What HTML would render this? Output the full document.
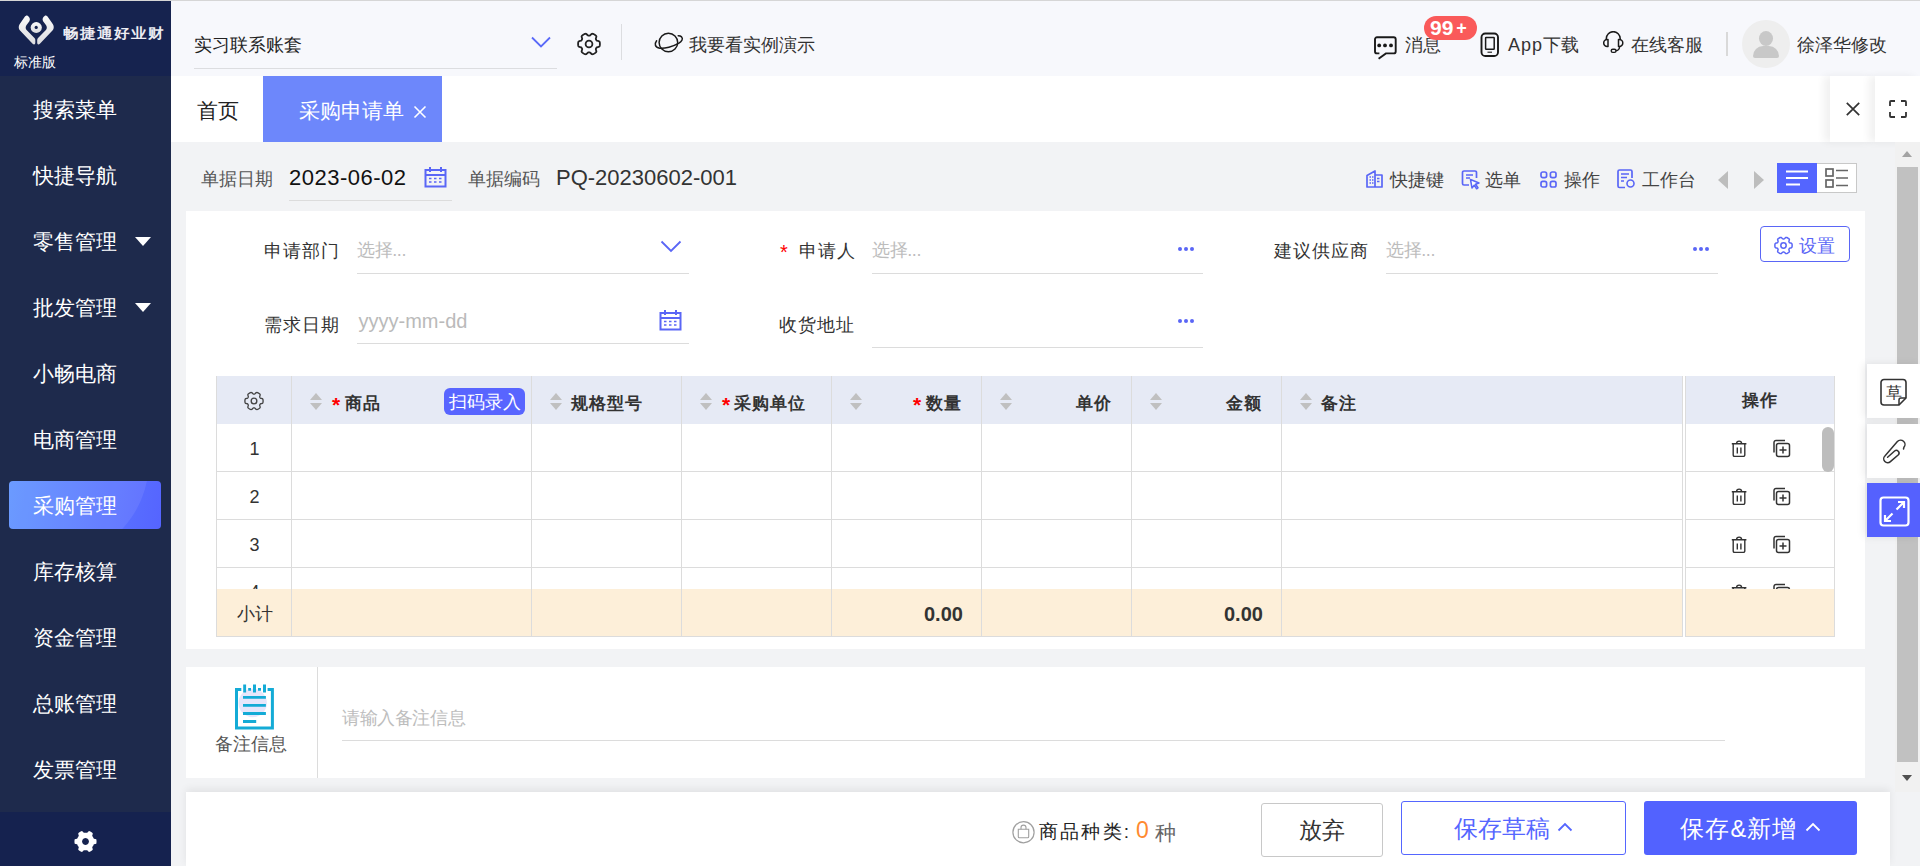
<!DOCTYPE html>
<html><head><meta charset="utf-8">
<style>
*{box-sizing:border-box;margin:0;padding:0}
html,body{width:1920px;height:866px;overflow:hidden}
body{position:relative;background:#f2f3f5;font-family:"Liberation Sans",sans-serif;color:#333}
.a{position:absolute;white-space:nowrap}
svg{display:block}
/* sidebar */
#sb{position:absolute;left:0;top:0;width:171px;height:866px;background:#1e2a4c}
#logo{position:absolute;left:0;top:0;width:171px;height:76px;background:#16234f}
#sbft{position:absolute;left:0;top:812px;width:171px;height:54px;background:#15224f}
.mi{position:absolute;left:33px;font-size:21px;line-height:24px;color:#fff}
.tri{position:absolute;left:135px;width:0;height:0;border-left:8px solid transparent;border-right:8px solid transparent;border-top:9px solid #fff}
#act{position:absolute;left:9px;top:481px;width:152px;height:48px;border-radius:4px;overflow:hidden;
 background:linear-gradient(100deg,#5f93ff 0%,#5b78ff 55%,#5564ff 100%)}
#hdr{position:absolute;left:171px;top:0;width:1749px;height:76px;background:#f7f8fc}
#topline{position:absolute;left:0;top:0;width:1920px;height:1px;background:#d6d6d6;z-index:50}
#tabs{position:absolute;left:171px;top:76px;width:1749px;height:66px;background:#fff}
.t18{font-size:18px;line-height:22px;color:#333}

.lbl{position:absolute;font-size:18px;line-height:22px;color:#333;letter-spacing:1px}
.ph{position:absolute;font-size:18px;line-height:22px;color:#bdbdbd;letter-spacing:-0.4px}
.ul{position:absolute;height:1px;background:#dcdcdc}
.dots{position:absolute;width:17px;height:6px}
.dots i{position:absolute;top:0.3px;width:4.2px;height:4.2px;border-radius:50%;background:#5a66f6}
.th{position:absolute;font-size:17px;line-height:20px;font-weight:bold;color:#333;letter-spacing:1px}
.ast{position:absolute;font-size:21px;line-height:20px;color:#f00;font-weight:bold}
.srt{position:absolute;width:12px;height:18px}
.srt:before{content:"";position:absolute;left:0;top:0;border-left:6px solid transparent;border-right:6px solid transparent;border-bottom:7.5px solid #c0c0c0}
.srt:after{content:"";position:absolute;left:0;top:10px;border-left:6px solid transparent;border-right:6px solid transparent;border-top:7.5px solid #c0c0c0}
.vl{position:absolute;width:1px;background:#dcdcdc}
.hl{position:absolute;height:1px;background:#dcdcdc}
.rn{position:absolute;font-size:18px;line-height:22px;color:#333;width:75px;text-align:center;padding-left:2px}
</style></head><body>
<div id="topline"></div>
<div id="sb">
 <div id="logo">
  <svg class="a" style="left:18px;top:15px" width="37" height="31" viewBox="0 0 37 31">
   <defs><linearGradient id="lg" x1="0" y1="0" x2="0" y2="1"><stop offset="0" stop-color="#fafafa"/><stop offset="1" stop-color="#dcdcdf"/></linearGradient></defs>
   <path id="lf" d="M9.6 0.8 C8.6 0.2 7.6 1 6.6 2 L1.6 9.2 C0.4 11 0.4 13.6 1.8 15.3 L14.6 28.8 C16 30 17.3 29.6 17.3 27.6 L17.3 25 C17.3 24 16.9 23.4 16.2 22.7 L8.6 15 C7.4 13.6 7.4 11.6 8.4 10.2 L11.4 6.2 C12.4 4.6 12 2.4 9.6 0.8 Z" fill="url(#lg)"/>
   <use href="#lf" transform="translate(36.5 0) scale(-1 1)"/>
   <ellipse cx="18.25" cy="12.5" rx="5.6" ry="5.4" fill="url(#lg)"/>
   <circle cx="18.2" cy="12.4" r="1.6" fill="#16234f"/>
  </svg>
  <div class="a" style="left:63px;top:24px;font-size:16px;line-height:18px;color:#ececf2;font-weight:bold;letter-spacing:1px;transform:scaleY(0.9);transform-origin:0 50%">畅捷通好业财</div>
  <div class="a" style="left:14px;top:54px;font-size:14px;line-height:16px;color:#fff">标准版</div>
 </div>
 <div class="mi" style="top:98px">搜索菜单</div>
 <div class="mi" style="top:164px">快捷导航</div>
 <div class="mi" style="top:230px">零售管理</div><div class="tri" style="top:237px"></div>
 <div class="mi" style="top:296px">批发管理</div><div class="tri" style="top:303px"></div>
 <div class="mi" style="top:362px">小畅电商</div>
 <div class="mi" style="top:428px">电商管理</div>
 <div id="act"><div style="position:absolute;left:-60px;top:-120px;width:200px;height:200px;border-radius:50%;background:rgba(255,255,255,0.08)"></div></div>
 <div class="mi" style="top:494px">采购管理</div>
 <div class="mi" style="top:560px">库存核算</div>
 <div class="mi" style="top:626px">资金管理</div>
 <div class="mi" style="top:692px">总账管理</div>
 <div class="mi" style="top:758px">发票管理</div>
 <div id="sbft">
  <svg class="a" style="left:73px;top:16.8px" width="25" height="25" viewBox="0 0 24 24"><path fill="#fff" fill-rule="evenodd" d="M22.60 12.00 L22.58 12.69 L22.50 13.38 L22.33 14.05 L21.39 14.51 L20.09 14.75 L19.77 15.22 L19.53 15.72 L19.27 16.20 L18.99 16.67 L18.67 17.12 L18.42 17.63 L18.87 18.87 L18.95 19.92 L18.45 20.41 L17.89 20.81 L17.30 21.18 L16.69 21.51 L16.05 21.79 L15.39 21.97 L14.51 21.39 L13.67 20.38 L13.10 20.34 L12.55 20.38 L12.00 20.40 L11.45 20.38 L10.90 20.34 L10.33 20.38 L9.49 21.39 L8.61 21.97 L7.95 21.79 L7.31 21.51 L6.70 21.18 L6.11 20.81 L5.55 20.41 L5.05 19.92 L5.13 18.87 L5.58 17.63 L5.33 17.12 L5.01 16.67 L4.73 16.20 L4.47 15.72 L4.23 15.22 L3.91 14.75 L2.61 14.51 L1.67 14.05 L1.50 13.38 L1.42 12.69 L1.40 12.00 L1.42 11.31 L1.50 10.62 L1.67 9.95 L2.61 9.49 L3.91 9.25 L4.23 8.78 L4.47 8.28 L4.73 7.80 L5.01 7.33 L5.33 6.88 L5.58 6.37 L5.13 5.13 L5.05 4.08 L5.55 3.59 L6.11 3.19 L6.70 2.82 L7.31 2.49 L7.95 2.21 L8.61 2.03 L9.49 2.61 L10.33 3.62 L10.90 3.66 L11.45 3.62 L12.00 3.60 L12.55 3.62 L13.10 3.66 L13.67 3.62 L14.51 2.61 L15.39 2.03 L16.05 2.21 L16.69 2.49 L17.30 2.82 L17.89 3.19 L18.45 3.59 L18.95 4.08 L18.87 5.13 L18.42 6.37 L18.67 6.88 L18.99 7.33 L19.27 7.80 L19.53 8.28 L19.77 8.78 L20.09 9.25 L21.39 9.49 L22.33 9.95 L22.50 10.62 L22.58 11.31Z M12 8.7a3.3 3.3 0 1 0 0.001 0Z"/></svg>
 </div>
</div>

<div id="hdr">
 <div class="a t18" style="left:23px;top:34px;color:#222">实习联系账套</div>
 <div class="a" style="left:23px;top:68px;width:363px;height:1px;background:#dcdde0"></div>
 <svg class="a" style="left:359px;top:36px" width="22" height="12" viewBox="0 0 22 12"><path d="M2 1.5 L11 10.5 L20 1.5" fill="none" stroke="#5a6af8" stroke-width="1.8"/></svg>
 <svg class="a" style="left:406px;top:32px" width="24" height="24" viewBox="0 0 24 24"><path fill="none" stroke="#222" stroke-width="1.8" stroke-linejoin="round" d="M22.90 12.00 L22.88 12.71 L22.80 13.42 L22.63 14.11 L22.14 14.72 L20.94 15.03 L19.93 15.29 L19.48 15.69 L19.19 16.15 L18.94 16.64 L18.81 17.23 L19.10 18.22 L19.43 19.43 L19.14 20.15 L18.63 20.64 L18.05 21.06 L17.45 21.44 L16.82 21.77 L16.17 22.06 L15.48 22.26 L14.72 22.14 L13.84 21.26 L13.12 20.51 L12.55 20.33 L12.00 20.30 L11.45 20.33 L10.88 20.51 L10.16 21.26 L9.28 22.14 L8.52 22.26 L7.83 22.06 L7.18 21.77 L6.55 21.44 L5.95 21.06 L5.37 20.64 L4.86 20.15 L4.57 19.43 L4.90 18.22 L5.19 17.23 L5.06 16.64 L4.81 16.15 L4.52 15.69 L4.07 15.29 L3.06 15.03 L1.86 14.72 L1.37 14.11 L1.20 13.42 L1.12 12.71 L1.10 12.00 L1.12 11.29 L1.20 10.58 L1.37 9.89 L1.86 9.28 L3.06 8.97 L4.07 8.71 L4.52 8.31 L4.81 7.85 L5.06 7.36 L5.19 6.77 L4.90 5.78 L4.57 4.57 L4.86 3.85 L5.37 3.36 L5.95 2.94 L6.55 2.56 L7.18 2.23 L7.83 1.94 L8.52 1.74 L9.28 1.86 L10.16 2.74 L10.88 3.49 L11.45 3.67 L12.00 3.70 L12.55 3.67 L13.12 3.49 L13.84 2.74 L14.72 1.86 L15.48 1.74 L16.17 1.94 L16.82 2.23 L17.45 2.56 L18.05 2.94 L18.63 3.36 L19.14 3.85 L19.43 4.57 L19.10 5.78 L18.81 6.77 L18.94 7.36 L19.19 7.85 L19.48 8.31 L19.93 8.71 L20.94 8.97 L22.14 9.28 L22.63 9.89 L22.80 10.58 L22.88 11.29Z"/><circle cx="12" cy="12" r="3.4" fill="none" stroke="#222" stroke-width="1.8"/></svg>
 <div class="a" style="left:450px;top:24px;width:1px;height:36px;background:#dcdde0"></div>
 <svg class="a" style="left:483px;top:31px" width="30" height="24" viewBox="0 0 30 24"><circle cx="14.4" cy="11.5" r="9.3" fill="none" stroke="#1a1a1a" stroke-width="1.5"/><path d="M2.6 9.8C0.6 12.5 0.4 16.4 5.8 17.2C10.5 17.8 19 15.5 24.6 12.4C28.2 10.2 29.2 7.6 27.6 5.9C26.9 5.2 25.6 4.8 24.2 4.8" fill="none" stroke="#1a1a1a" stroke-width="1.5" stroke-linecap="round"/></svg>
 <div class="a t18" style="left:518px;top:34px;color:#333">我要看实例演示</div>

 <svg class="a" style="left:1202px;top:35px" width="26" height="25" viewBox="0 0 26 25"><path d="M6.4 18.4H4a2 2 0 0 1-2-2V4.3a2 2 0 0 1 2-2h16.7a2 2 0 0 1 2 2v12.1a2 2 0 0 1-2 2h-7.8L5.6 23.8" fill="none" stroke="#1a1a1a" stroke-width="1.9"/><circle cx="6.2" cy="10.4" r="1.9" fill="#1a1a1a"/><circle cx="12" cy="10.4" r="1.9" fill="#1a1a1a"/><circle cx="18" cy="10.4" r="1.9" fill="#1a1a1a"/></svg>
 <div class="a t18" style="left:1234px;top:34px;color:#333">消息</div>
 <div class="a" style="left:1253px;top:16px;width:53px;height:24px;border-radius:12px;background:#fa5a5a;color:#fff;font-size:21px;line-height:23px;font-weight:bold;text-align:left;padding-left:6px">99<span style="font-size:18px;margin-left:3px;position:relative;top:-1px">+</span></div>
 <svg class="a" style="left:1309px;top:32px" width="20" height="25" viewBox="0 0 20 25"><rect x="1.5" y="1.5" width="16.5" height="22.5" rx="3.8" fill="none" stroke="#1a1a1a" stroke-width="1.9"/><rect x="5.6" y="5.5" width="8.6" height="11.8" rx="0.6" fill="none" stroke="#1a1a1a" stroke-width="1.5"/><path d="M7.5 20.2h4.5" stroke="#1a1a1a" stroke-width="1.1"/></svg>
 <div class="a t18" style="left:1337px;top:34px;color:#333"><span style="letter-spacing:1px">App</span>下载</div>
 <svg class="a" style="left:1431px;top:31px" width="23" height="23" viewBox="0 0 23 23"><path d="M4.3 8.6V7.6A6.95 6.95 0 0 1 18.2 7.6V8.6" fill="none" stroke="#1a1a1a" stroke-width="1.5"/><path d="M6 8.6V15.6H5.2A3.5 3.5 0 0 1 5.2 8.6Z M16.5 8.6V15.6H17.3A3.5 3.5 0 0 0 17.3 8.6Z" fill="none" stroke="#1a1a1a" stroke-width="1.5" stroke-linejoin="round"/><path d="M17.6 15.8C17.4 18.2 16 19.6 13.9 19.8" fill="none" stroke="#1a1a1a" stroke-width="1.4"/><rect x="9.2" y="18.2" width="4.8" height="3.2" rx="1.6" fill="none" stroke="#1a1a1a" stroke-width="1.4"/></svg>
 <div class="a t18" style="left:1460px;top:34px;color:#333">在线客服</div>
 <div class="a" style="left:1555px;top:32px;width:2px;height:24px;background:#d9d9d9"></div>
 <div class="a" style="left:1571px;top:20px;width:48px;height:48px;border-radius:50%;background:#eeeeee;overflow:hidden">
  <div style="position:absolute;left:17px;top:11px;width:14px;height:15px;border-radius:50%;background:#c8c8c8"></div>
  <div style="position:absolute;left:11px;top:26px;width:26px;height:12px;border-radius:10px 10px 2px 2px;background:#c8c8c8"></div>
 </div>
 <div class="a t18" style="left:1626px;top:34px;color:#333">徐泽华修改</div>
</div>
<div id="tabs">
 <div class="a" style="left:26px;top:23px;font-size:21px;line-height:24px;color:#222">首页</div>
 <div class="a" style="left:92px;top:0;width:179px;height:66px;background:#6d87fb"></div>
 <div class="a" style="left:128px;top:23px;font-size:21px;line-height:24px;color:#fff">采购申请单</div>
 <svg class="a" style="left:242px;top:29px" width="14" height="14" viewBox="0 0 14 14"><path d="M1.5 1.5L12.5 12.5M12.5 1.5L1.5 12.5" stroke="#fff" stroke-width="1.6"/></svg>
 <div class="a" style="left:1659px;top:0;width:45px;height:66px;background:#fff;box-shadow:-6px 0 8px rgba(0,0,0,0.06)"></div>
 <svg class="a" style="left:1675px;top:26px" width="14" height="14" viewBox="0 0 14 14"><path d="M0.8 0.8L13.2 13.2M13.2 0.8L0.8 13.2" stroke="#333" stroke-width="1.7"/></svg>
 <div class="a" style="left:1704px;top:0;width:45px;height:66px;background:#fff;box-shadow:-6px 0 8px rgba(0,0,0,0.06)"></div>
 <svg class="a" style="left:1718px;top:24px" width="18" height="18" viewBox="0 0 18 18"><path d="M1 6V2a1 1 0 0 1 1-1h4M12 1h4a1 1 0 0 1 1 1v4M17 12v4a1 1 0 0 1-1 1h-4M6 17H2a1 1 0 0 1-1-1v-4" fill="none" stroke="#333" stroke-width="1.8"/></svg>
</div>

<!-- toolbar row -->
<div class="lbl" style="left:201px;top:168px;color:#555;letter-spacing:0">单据日期</div>
<div class="a" style="left:289px;top:165px;font-size:22px;line-height:26px;color:#111;letter-spacing:0.5px">2023-06-02</div>
<svg class="a" style="left:424px;top:166px" width="23" height="22" viewBox="0 0 23 22"><rect x="1.5" y="4" width="20" height="16.5" fill="none" stroke="#5a66f6" stroke-width="2"/><path d="M6 1v5M17 1v5M1.5 9h20" stroke="#5a66f6" stroke-width="2"/><path d="M5 12.5h2.5M10 12.5h2.5M15 12.5h2.5M5 16h2.5M10 16h2.5M15 16h2.5" stroke="#5a66f6" stroke-width="1.6"/></svg>
<div class="ul" style="left:289px;top:200px;width:163px"></div>
<div class="lbl" style="left:468px;top:168px;color:#555;letter-spacing:0">单据编码</div>
<div class="a" style="left:556px;top:165px;font-size:22px;line-height:26px;color:#333">PQ-20230602-001</div>

<svg class="a" style="left:1365px;top:169px" width="20" height="20" viewBox="0 0 20 20"><path d="M2 6.5 L10 2 V18 H2 Z M10 6 H17 V18 H10" fill="none" stroke="#5a66f6" stroke-width="1.7" stroke-linejoin="round"/><path d="M4.5 8h1.5M7 8h1.5M4.5 11h1.5M7 11h1.5M4.5 14h1.5M7 14h1.5M12 9.5h2.5M12 12.5h2.5" stroke="#5a66f6" stroke-width="1.4"/></svg>
<div class="lbl" style="left:1390px;top:169px;color:#444;letter-spacing:0">快捷键</div>
<svg class="a" style="left:1461px;top:170px" width="20" height="20" viewBox="0 0 20 20"><path d="M8 15H3a1.5 1.5 0 0 1-1.5-1.5v-11A1.5 1.5 0 0 1 3 1h11a1.5 1.5 0 0 1 1.5 1.5V8" fill="none" stroke="#5a66f6" stroke-width="1.7"/><path d="M5 5h7M5 8h4" stroke="#5a66f6" stroke-width="1.5"/><path d="M9.5 9.5 L18 13 L14.5 14.2 L17 17.8 L15.6 18.8 L13.2 15.2 L11 18 Z" fill="#fff" stroke="#5a66f6" stroke-width="1.5" stroke-linejoin="round"/></svg>
<div class="lbl" style="left:1485px;top:169px;color:#444;letter-spacing:0">选单</div>
<svg class="a" style="left:1540px;top:170.5px" width="17" height="17" viewBox="0 0 17 17"><rect x="1" y="1" width="5.6" height="5.6" rx="1.8" fill="none" stroke="#5a66f6" stroke-width="1.7"/><rect x="10.4" y="1" width="5.6" height="5.6" rx="1.8" fill="none" stroke="#5a66f6" stroke-width="1.7"/><rect x="1" y="10.4" width="5.6" height="5.6" rx="1.8" fill="none" stroke="#5a66f6" stroke-width="1.7"/><rect x="10.4" y="10.4" width="5.6" height="5.6" rx="1.8" fill="none" stroke="#5a66f6" stroke-width="1.7"/></svg>
<div class="lbl" style="left:1564px;top:169px;color:#444;letter-spacing:0">操作</div>
<svg class="a" style="left:1617px;top:169px" width="19" height="20" viewBox="0 0 19 20"><path d="M8 18.5H2.5a1.5 1.5 0 0 1-1.5-1.5V2.5A1.5 1.5 0 0 1 2.5 1h11A1.5 1.5 0 0 1 15 2.5V9" fill="none" stroke="#5a66f6" stroke-width="1.7"/><path d="M4 5h8M4 8.5h6M4 12h3" stroke="#5a66f6" stroke-width="1.5"/><circle cx="13.5" cy="14.5" r="3.5" fill="none" stroke="#5a66f6" stroke-width="1.6"/></svg>
<div class="lbl" style="left:1642px;top:169px;color:#444;letter-spacing:0">工作台</div>
<div class="a" style="left:1718px;top:170.5px;width:0;height:0;border-top:9px solid transparent;border-bottom:9px solid transparent;border-right:10px solid #bdbdbd"></div>
<div class="a" style="left:1754px;top:170.5px;width:0;height:0;border-top:9px solid transparent;border-bottom:9px solid transparent;border-left:10px solid #bdbdbd"></div>
<div class="a" style="left:1777px;top:163px;width:80px;height:30px;border:1px solid #c8c8c8;background:#fff"></div>
<div class="a" style="left:1777px;top:163px;width:40px;height:30px;background:#5465ff"></div>
<svg class="a" style="left:1785px;top:169px" width="25" height="18" viewBox="0 0 25 18"><path d="M1 2.5h22M1 9h22M1 15.5h14" stroke="#fff" stroke-width="1.8"/></svg>
<svg class="a" style="left:1825px;top:168px" width="24" height="20" viewBox="0 0 24 20"><rect x="1" y="1" width="7" height="7" fill="none" stroke="#666" stroke-width="1.7"/><rect x="1" y="12" width="7" height="7" fill="none" stroke="#666" stroke-width="1.7"/><path d="M11 2.5h12M11 10h12M11 17.5h12" stroke="#666" stroke-width="1.7"/></svg>

<!-- scrollbar -->
<div class="a" style="left:1895px;top:142px;width:25px;height:650px;background:#f1f1f1"></div>
<div class="a" style="left:1897px;top:167px;width:21px;height:595px;background:#c1c1c1"></div>
<div class="a" style="left:1902px;top:151px;width:0;height:0;border-left:5px solid transparent;border-right:5px solid transparent;border-bottom:6px solid #a3a3a3"></div>
<div class="a" style="left:1902px;top:775px;width:0;height:0;border-left:5px solid transparent;border-right:5px solid transparent;border-top:6px solid #505050"></div>

<!-- form panel -->
<div class="a" style="left:186px;top:211px;width:1679px;height:438px;background:#fff"></div>
<div class="lbl" style="left:264px;top:240px">申请部门</div>
<div class="ph" style="left:357px;top:239px">选择...</div>
<svg class="a" style="left:660px;top:240px" width="22" height="13" viewBox="0 0 22 13"><path d="M1.5 1.5L11 11L20.5 1.5" fill="none" stroke="#5a66f6" stroke-width="1.8"/></svg>
<div class="ul" style="left:357px;top:273px;width:332px"></div>
<div class="a" style="left:780px;top:241px;font-size:20px;line-height:22px;color:#f00">*</div>
<div class="lbl" style="left:799px;top:240px">申请人</div>
<div class="ph" style="left:872px;top:239px">选择...</div>
<div class="dots" style="left:1177px;top:247px"><i style="left:0.5px"></i><i style="left:6.5px"></i><i style="left:12.5px"></i></div>
<div class="ul" style="left:872px;top:273px;width:331px"></div>
<div class="lbl" style="left:1274px;top:240px">建议供应商</div>
<div class="ph" style="left:1386px;top:239px">选择...</div>
<div class="dots" style="left:1692px;top:247px"><i style="left:0.5px"></i><i style="left:6.5px"></i><i style="left:12.5px"></i></div>
<div class="ul" style="left:1386px;top:273px;width:332px"></div>
<div class="a" style="left:1760px;top:226px;width:90px;height:36px;border:1px solid #5a66f6;border-radius:4px"></div>
<svg class="a" style="left:1774px;top:236px" width="19" height="19" viewBox="0 0 24 24"><path fill="none" stroke="#5a66f6" stroke-width="1.9" stroke-linejoin="round" d="M22.90 12.00 L22.88 12.71 L22.80 13.42 L22.63 14.11 L22.14 14.72 L20.94 15.03 L19.93 15.29 L19.48 15.69 L19.19 16.15 L18.94 16.64 L18.81 17.23 L19.10 18.22 L19.43 19.43 L19.14 20.15 L18.63 20.64 L18.05 21.06 L17.45 21.44 L16.82 21.77 L16.17 22.06 L15.48 22.26 L14.72 22.14 L13.84 21.26 L13.12 20.51 L12.55 20.33 L12.00 20.30 L11.45 20.33 L10.88 20.51 L10.16 21.26 L9.28 22.14 L8.52 22.26 L7.83 22.06 L7.18 21.77 L6.55 21.44 L5.95 21.06 L5.37 20.64 L4.86 20.15 L4.57 19.43 L4.90 18.22 L5.19 17.23 L5.06 16.64 L4.81 16.15 L4.52 15.69 L4.07 15.29 L3.06 15.03 L1.86 14.72 L1.37 14.11 L1.20 13.42 L1.12 12.71 L1.10 12.00 L1.12 11.29 L1.20 10.58 L1.37 9.89 L1.86 9.28 L3.06 8.97 L4.07 8.71 L4.52 8.31 L4.81 7.85 L5.06 7.36 L5.19 6.77 L4.90 5.78 L4.57 4.57 L4.86 3.85 L5.37 3.36 L5.95 2.94 L6.55 2.56 L7.18 2.23 L7.83 1.94 L8.52 1.74 L9.28 1.86 L10.16 2.74 L10.88 3.49 L11.45 3.67 L12.00 3.70 L12.55 3.67 L13.12 3.49 L13.84 2.74 L14.72 1.86 L15.48 1.74 L16.17 1.94 L16.82 2.23 L17.45 2.56 L18.05 2.94 L18.63 3.36 L19.14 3.85 L19.43 4.57 L19.10 5.78 L18.81 6.77 L18.94 7.36 L19.19 7.85 L19.48 8.31 L19.93 8.71 L20.94 8.97 L22.14 9.28 L22.63 9.89 L22.80 10.58 L22.88 11.29Z"/><circle cx="12" cy="12" r="3.4" fill="none" stroke="#5a66f6" stroke-width="1.9"/></svg>
<div class="a" style="left:1799px;top:235px;font-size:18px;line-height:22px;color:#5a66f6">设置</div>

<div class="lbl" style="left:264px;top:314px">需求日期</div>
<div class="a" style="left:358.5px;top:308.5px;font-size:20px;line-height:24px;color:#bababa">yyyy-mm-dd</div>
<svg class="a" style="left:659px;top:309px" width="23" height="22" viewBox="0 0 23 22"><rect x="1.5" y="4" width="20" height="16.5" fill="none" stroke="#5a66f6" stroke-width="2"/><path d="M6 1v5M17 1v5M1.5 9h20" stroke="#5a66f6" stroke-width="2"/><path d="M5 12.5h2.5M10 12.5h2.5M15 12.5h2.5M5 16h2.5M10 16h2.5M15 16h2.5" stroke="#5a66f6" stroke-width="1.6"/></svg>
<div class="ul" style="left:357px;top:343px;width:332px"></div>
<div class="lbl" style="left:779px;top:314px">收货地址</div>
<div class="dots" style="left:1177px;top:319px"><i style="left:0.5px"></i><i style="left:6.5px"></i><i style="left:12.5px"></i></div>
<div class="ul" style="left:872px;top:347px;width:331px"></div>

<!-- table -->
<div class="a" style="left:216px;top:376px;width:1467px;height:48px;background:#e6eaf5"></div>
<div class="a" style="left:1685px;top:376px;width:150px;height:48px;background:#e6eaf5"></div>
<div class="a" style="left:216px;top:589px;width:1467px;height:47px;background:#fdefd9"></div>
<div class="a" style="left:1685px;top:589px;width:150px;height:47px;background:#fdefd9"></div>
<!-- row lines -->
<div class="hl" style="left:216px;top:471px;width:1467px"></div>
<div class="hl" style="left:216px;top:519px;width:1467px"></div>
<div class="hl" style="left:216px;top:567px;width:1467px"></div>
<div class="hl" style="left:216px;top:636px;width:1467px"></div>
<div class="hl" style="left:1685px;top:471px;width:150px"></div>
<div class="hl" style="left:1685px;top:519px;width:150px"></div>
<div class="hl" style="left:1685px;top:567px;width:150px"></div>
<div class="hl" style="left:1685px;top:636px;width:150px"></div>
<!-- col lines -->
<div class="vl" style="left:216px;top:376px;height:261px"></div>
<div class="vl" style="left:291px;top:376px;height:261px"></div>
<div class="vl" style="left:531px;top:376px;height:261px"></div>
<div class="vl" style="left:681px;top:376px;height:261px"></div>
<div class="vl" style="left:831px;top:376px;height:261px"></div>
<div class="vl" style="left:981px;top:376px;height:261px"></div>
<div class="vl" style="left:1131px;top:376px;height:261px"></div>
<div class="vl" style="left:1281px;top:376px;height:261px"></div>
<div class="vl" style="left:1682px;top:376px;height:261px"></div>
<div class="vl" style="left:1685px;top:376px;height:261px"></div>
<div class="vl" style="left:1834px;top:376px;height:261px"></div>
<!-- header content -->
<svg class="a" style="left:244px;top:391px" width="20" height="20" viewBox="0 0 24 24"><path fill="none" stroke="#444" stroke-width="1.6" stroke-linejoin="round" d="M22.90 12.00 L22.88 12.71 L22.80 13.42 L22.63 14.11 L22.14 14.72 L20.94 15.03 L19.93 15.29 L19.48 15.69 L19.19 16.15 L18.94 16.64 L18.81 17.23 L19.10 18.22 L19.43 19.43 L19.14 20.15 L18.63 20.64 L18.05 21.06 L17.45 21.44 L16.82 21.77 L16.17 22.06 L15.48 22.26 L14.72 22.14 L13.84 21.26 L13.12 20.51 L12.55 20.33 L12.00 20.30 L11.45 20.33 L10.88 20.51 L10.16 21.26 L9.28 22.14 L8.52 22.26 L7.83 22.06 L7.18 21.77 L6.55 21.44 L5.95 21.06 L5.37 20.64 L4.86 20.15 L4.57 19.43 L4.90 18.22 L5.19 17.23 L5.06 16.64 L4.81 16.15 L4.52 15.69 L4.07 15.29 L3.06 15.03 L1.86 14.72 L1.37 14.11 L1.20 13.42 L1.12 12.71 L1.10 12.00 L1.12 11.29 L1.20 10.58 L1.37 9.89 L1.86 9.28 L3.06 8.97 L4.07 8.71 L4.52 8.31 L4.81 7.85 L5.06 7.36 L5.19 6.77 L4.90 5.78 L4.57 4.57 L4.86 3.85 L5.37 3.36 L5.95 2.94 L6.55 2.56 L7.18 2.23 L7.83 1.94 L8.52 1.74 L9.28 1.86 L10.16 2.74 L10.88 3.49 L11.45 3.67 L12.00 3.70 L12.55 3.67 L13.12 3.49 L13.84 2.74 L14.72 1.86 L15.48 1.74 L16.17 1.94 L16.82 2.23 L17.45 2.56 L18.05 2.94 L18.63 3.36 L19.14 3.85 L19.43 4.57 L19.10 5.78 L18.81 6.77 L18.94 7.36 L19.19 7.85 L19.48 8.31 L19.93 8.71 L20.94 8.97 L22.14 9.28 L22.63 9.89 L22.80 10.58 L22.88 11.29Z"/><circle cx="12" cy="12" r="3.4" fill="none" stroke="#444" stroke-width="1.6"/></svg>
<div class="srt" style="left:310px;top:393px"></div><div class="ast" style="left:332px;top:395px">*</div><div class="th" style="left:345px;top:394px">商品</div>
<div class="a" style="left:444px;top:388px;width:81px;height:27px;border-radius:6px;background:#5865ff;color:#fff;font-size:18px;line-height:28px;text-align:center">扫码录入</div>
<div class="srt" style="left:550px;top:393px"></div><div class="th" style="left:571px;top:394px">规格型号</div>
<div class="srt" style="left:700px;top:393px"></div><div class="ast" style="left:722px;top:395px">*</div><div class="th" style="left:734px;top:394px">采购单位</div>
<div class="srt" style="left:850px;top:393px"></div><div class="ast" style="left:913px;top:395px">*</div><div class="th" style="left:926px;top:394px">数量</div>
<div class="srt" style="left:1000px;top:393px"></div><div class="th" style="left:1076px;top:394px">单价</div>
<div class="srt" style="left:1150px;top:393px"></div><div class="th" style="left:1226px;top:394px">金额</div>
<div class="srt" style="left:1300px;top:393px"></div><div class="th" style="left:1321px;top:394px">备注</div>
<div class="th" style="left:1742px;top:391px">操作</div>
<div class="rn" style="left:216px;top:438px">1</div>
<div class="rn" style="left:216px;top:486px">2</div>
<div class="rn" style="left:216px;top:534px">3</div>
<div class="rn" style="left:216px;top:603px">小计</div>
<div class="a" style="left:924px;top:602px;font-size:20px;line-height:24px;font-weight:bold;color:#333">0.00</div>
<div class="a" style="left:1224px;top:602px;font-size:20px;line-height:24px;font-weight:bold;color:#333">0.00</div>
<svg class="a" style="left:1731px;top:439px" width="16" height="18" viewBox="0 0 16 18"><path d="M0.8 4.8h14.6M5.6 4.6a2.5 2.5 0 0 1 5 0M2.2 4.8V16a1.5 1.5 0 0 0 1.5 1.5h8.6a1.5 1.5 0 0 0 1.5-1.5V4.8M6.3 8.5v6M9.9 8.5v6" fill="none" stroke="#333" stroke-width="1.4"/></svg><svg class="a" style="left:1771px;top:439px" width="20" height="19" viewBox="0 0 20 19"><path d="M3 13.5V3.5a2 2 0 0 1 2-2h9" fill="none" stroke="#333" stroke-width="1.5"/><rect x="5.5" y="4.5" width="13" height="13" rx="2" fill="none" stroke="#333" stroke-width="1.5"/><path d="M12 7.5v7M8.5 11h7" stroke="#333" stroke-width="1.5"/></svg><svg class="a" style="left:1731px;top:487px" width="16" height="18" viewBox="0 0 16 18"><path d="M0.8 4.8h14.6M5.6 4.6a2.5 2.5 0 0 1 5 0M2.2 4.8V16a1.5 1.5 0 0 0 1.5 1.5h8.6a1.5 1.5 0 0 0 1.5-1.5V4.8M6.3 8.5v6M9.9 8.5v6" fill="none" stroke="#333" stroke-width="1.4"/></svg><svg class="a" style="left:1771px;top:487px" width="20" height="19" viewBox="0 0 20 19"><path d="M3 13.5V3.5a2 2 0 0 1 2-2h9" fill="none" stroke="#333" stroke-width="1.5"/><rect x="5.5" y="4.5" width="13" height="13" rx="2" fill="none" stroke="#333" stroke-width="1.5"/><path d="M12 7.5v7M8.5 11h7" stroke="#333" stroke-width="1.5"/></svg><svg class="a" style="left:1731px;top:535px" width="16" height="18" viewBox="0 0 16 18"><path d="M0.8 4.8h14.6M5.6 4.6a2.5 2.5 0 0 1 5 0M2.2 4.8V16a1.5 1.5 0 0 0 1.5 1.5h8.6a1.5 1.5 0 0 0 1.5-1.5V4.8M6.3 8.5v6M9.9 8.5v6" fill="none" stroke="#333" stroke-width="1.4"/></svg><svg class="a" style="left:1771px;top:535px" width="20" height="19" viewBox="0 0 20 19"><path d="M3 13.5V3.5a2 2 0 0 1 2-2h9" fill="none" stroke="#333" stroke-width="1.5"/><rect x="5.5" y="4.5" width="13" height="13" rx="2" fill="none" stroke="#333" stroke-width="1.5"/><path d="M12 7.5v7M8.5 11h7" stroke="#333" stroke-width="1.5"/></svg><div class="a" style="left:216px;top:568px;width:1620px;height:21px;overflow:hidden"><div class="rn" style="left:0;top:13px">4</div><svg class="a" style="left:1515px;top:15px" width="16" height="18" viewBox="0 0 16 18"><path d="M0.8 4.8h14.6M5.6 4.6a2.5 2.5 0 0 1 5 0M2.2 4.8V16a1.5 1.5 0 0 0 1.5 1.5h8.6a1.5 1.5 0 0 0 1.5-1.5V4.8M6.3 8.5v6M9.9 8.5v6" fill="none" stroke="#333" stroke-width="1.4"/></svg><svg class="a" style="left:1555px;top:15px" width="20" height="19" viewBox="0 0 20 19"><path d="M3 13.5V3.5a2 2 0 0 1 2-2h9" fill="none" stroke="#333" stroke-width="1.5"/><rect x="5.5" y="4.5" width="13" height="13" rx="2" fill="none" stroke="#333" stroke-width="1.5"/><path d="M12 7.5v7M8.5 11h7" stroke="#333" stroke-width="1.5"/></svg></div><div class="a" style="left:1822px;top:427px;width:12px;height:45px;border-radius:6px;background:#bdbdbd"></div>

<!-- remarks panel -->
<div class="a" style="left:186px;top:667px;width:1679px;height:111px;background:#fff"></div>
<div class="vl" style="left:317px;top:667px;height:111px"></div>
<svg class="a" style="left:233px;top:683px" width="43" height="48" viewBox="0 0 43 48">
 <circle cx="19.7" cy="20" r="14.2" fill="#e6e6fb"/>
 <path d="M8.3 6.5H3.5V45.1H39.4V6.5H34.6" fill="none" stroke="#14abd6" stroke-width="3"/>
 <path d="M10.2 1.6h2.9v8h-2.9zM20 1.6h3v8h-3zM30 1.6h3v8h-3zM15.2 5h2.8v2.8h-2.8zM25 5h3v2.8h-3z" fill="#14abd6"/>
 <path d="M10 14.4h22.9M10 22.4h22.9M10 30.5h22.9M10 38.5h13.2" stroke="#14abd6" stroke-width="2.8"/>
</svg>
<div class="a" style="left:215px;top:733px;font-size:18px;line-height:22px;color:#555">备注信息</div>
<div class="ph" style="left:342px;top:707px">请输入备注信息</div>
<div class="ul" style="left:342px;top:740px;width:1383px"></div>

<!-- footer -->
<div class="a" style="left:186px;top:792px;width:1704px;height:74px;background:#fff;box-shadow:0 -3px 8px rgba(0,0,0,0.07)"></div>
<svg class="a" style="left:1012px;top:821px" width="23" height="23" viewBox="0 0 23 23"><circle cx="11.5" cy="11.2" r="10.6" fill="none" stroke="#a0a0a0" stroke-width="1.2"/><path d="M6.3 8.2h10.4v7.6a1 1 0 0 1-1 1H7.3a1 1 0 0 1-1-1z" fill="none" stroke="#a0a0a0" stroke-width="1.1"/><path d="M9 8.2V6.6a2.5 2.5 0 0 1 5 0v1.6" fill="none" stroke="#a0a0a0" stroke-width="1.1"/></svg>
<div class="a" style="left:1039px;top:820px;font-size:19px;line-height:23px;color:#222;letter-spacing:2.2px">商品种类:</div>
<div class="a" style="left:1136px;top:817px;font-size:23px;line-height:27px;color:#ff8a30">0</div>
<div class="a" style="left:1155px;top:820px;font-size:21px;line-height:25px;color:#666">种</div>
<div class="a" style="left:1261px;top:803px;width:122px;height:54px;border:1px solid #c8c8c8;border-radius:3px;background:#fff;font-size:23px;line-height:52px;text-align:center;color:#333">放弃</div>
<div class="a" style="left:1401px;top:801px;width:225px;height:54px;border:1px solid #5566ff;border-radius:3px;background:#fff"></div>
<div class="a" style="left:1454px;top:815px;font-size:23.5px;line-height:28px;color:#5566ff;letter-spacing:0">保存草稿</div>
<svg class="a" style="left:1557px;top:822px" width="16" height="10" viewBox="0 0 16 10"><path d="M1.5 8.5L8 2L14.5 8.5" fill="none" stroke="#5566ff" stroke-width="1.8"/></svg>
<div class="a" style="left:1644px;top:801px;width:213px;height:54px;border-radius:3px;background:#5262ff"></div>
<div class="a" style="left:1680px;top:815px;font-size:23.5px;line-height:28px;color:#fff;letter-spacing:1.2px">保存&amp;新增</div>
<svg class="a" style="left:1805px;top:822px" width="16" height="10" viewBox="0 0 16 10"><path d="M1.5 8.5L8 2L14.5 8.5" fill="none" stroke="#fff" stroke-width="1.8"/></svg>

<!-- floating tools -->
<div class="a" style="left:1867px;top:364px;width:53px;height:54px;background:#fff;box-shadow:-3px 0 8px rgba(0,0,0,0.08)"></div>
<svg class="a" style="left:1880px;top:378px" width="28" height="29" viewBox="0 0 28 29"><path d="M4 1.5h19a3 3 0 0 1 3 3V20l-7 7H4a3 3 0 0 1-3-3V4.5a3 3 0 0 1 3-3z" fill="none" stroke="#333" stroke-width="1.6"/><path d="M26 20h-5a2 2 0 0 0-2 2v5" fill="none" stroke="#333" stroke-width="1.5"/><text x="13.5" y="20" font-size="16" text-anchor="middle" fill="#333" font-family="Liberation Sans,sans-serif">草</text></svg>
<div class="a" style="left:1867px;top:424px;width:53px;height:54px;background:#fff;box-shadow:-3px 0 8px rgba(0,0,0,0.08)"></div>
<svg class="a" style="left:1880px;top:438px" width="28" height="28" viewBox="0 0 28 28"><path d="M7.6 19.2 L14.6 13 A2.7 2.7 0 0 1 18.4 16.8 L10.4 23.6 A3.9 3.9 0 0 1 4.9 18 L17.4 3.6 A4.3 4.3 0 0 1 23.9 9.3 L23.5 11" fill="none" stroke="#333" stroke-width="1.5" stroke-linecap="round"/></svg>
<div class="a" style="left:1867px;top:483px;width:53px;height:54px;background:#5561fe;box-shadow:-3px 0 8px rgba(0,0,0,0.08)"></div>
<svg class="a" style="left:1879px;top:496px" width="31" height="31" viewBox="0 0 31 31"><rect x="1.5" y="1.5" width="28" height="28" rx="3" fill="none" stroke="#fff" stroke-width="2.2"/><path d="M17.5 13.5L25 6M19 6h6v6M13.5 17.5L6 25M6 19v6h6" fill="none" stroke="#fff" stroke-width="2.2"/></svg>


</body></html>
